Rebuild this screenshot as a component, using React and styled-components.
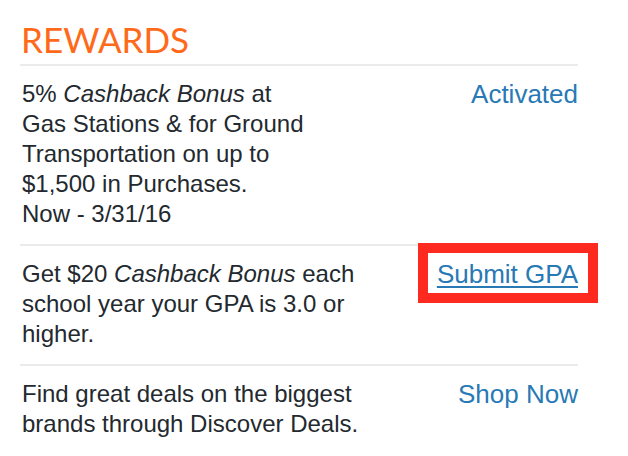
import React from 'react'
import styled, { createGlobalStyle } from 'styled-components'

const GlobalStyle = createGlobalStyle`
  body {
    margin: 0;
    background: #fff;
    font-family: 'Liberation Sans', Arial, Helvetica, sans-serif;
  }
`

const rewards = [
  {
    id: 'gas',
    text: (
      <>
        5% <em>Cashback Bonus</em> at
        <br />
        Gas Stations &amp; for Ground
        <br />
        Transportation on up to
        <br />
        $1,500 in Purchases.
        <br />
        Now - 3/31/16
      </>
    ),
    action: 'Activated',
  },
  {
    id: 'gpa',
    text: (
      <>
        Get $20 <em>Cashback Bonus</em> each school year your GPA is 3.0 or
        higher.
      </>
    ),
    action: 'Submit GPA',
    underline: true,
    highlight: true,
  },
  {
    id: 'deals',
    text: <>Find great deals on the biggest brands through Discover Deals.</>,
    action: 'Shop Now',
  },
]

function App() {
  return (
    <>
      <GlobalStyle />
      <Panel>
        <Heading>REWARDS</Heading>
        {rewards.map((reward) => (
          <Row key={reward.id}>
            <Description>{reward.text}</Description>
            <Action href="#" $underline={reward.underline}>
              {reward.action}
              {reward.highlight && <Highlight />}
            </Action>
          </Row>
        ))}
      </Panel>
    </>
  )
}

const Panel = styled.div`
  width: 558px;
  padding: 19px 0 0 20px;
`

const Heading = styled.h2`
  margin: 0;
  padding: 0 0 5px 1px;
  font-family: Lato, 'Open Sans', sans-serif;
  font-weight: 400;
  font-size: 35px;
  line-height: 40px;
  color: #ff6a1a;
`

const Row = styled.div`
  display: flex;
  justify-content: space-between;
  align-items: flex-start;
  padding: 13px 0 15px;
  border-top: 2px solid #ebebeb;
`

const Description = styled.p`
  margin: 0;
  padding-left: 2px;
  max-width: 360px;
  font-size: 24px;
  line-height: 30px;
  color: #23292e;

  em {
    font-style: italic;
  }
`

const Action = styled.a`
  position: relative;
  font-size: 26px;
  line-height: 30px;
  color: #2979b5;
  white-space: nowrap;
  text-decoration: ${(p) => (p.$underline ? 'underline' : 'none')};
  text-underline-offset: 3px;
  text-decoration-thickness: 2px;
`

const Highlight = styled.span`
  position: absolute;
  left: -19px;
  right: -20px;
  top: -16px;
  bottom: -14px;
  border: 10px solid #ff2a1f;
  pointer-events: none;
`

export default App
